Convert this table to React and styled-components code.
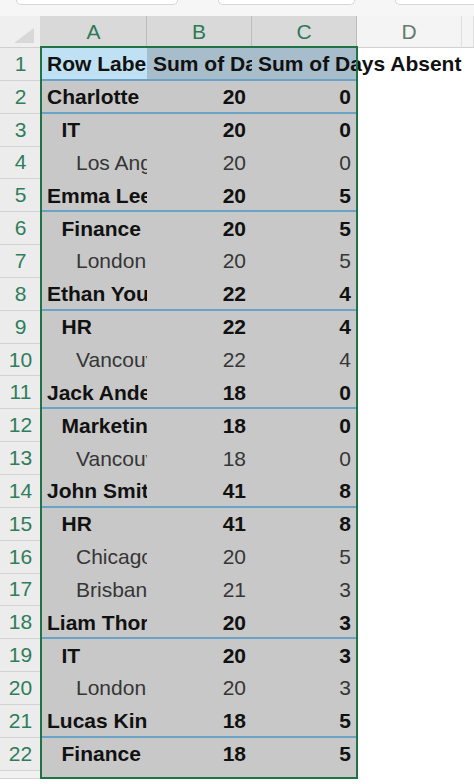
import React from "react";
import styled, { createGlobalStyle } from "styled-components";

const ROW_H = 32.85;

const Global = createGlobalStyle`
  html, body { margin: 0; padding: 0; background: #ffffff; }
  body { overflow: hidden; }
`;

const Page = styled.div`
  width: 474px;
  height: 784px;
  overflow: hidden;
  display: flex;
  flex-direction: column;
  background: #ffffff;
  font-family: "Liberation Sans", Arial, sans-serif;
`;

const TopBar = styled.div`
  height: 16px;
  flex: none;
  background: #f6f6f6;
  display: flex;
  align-items: flex-start;
  padding-left: 16px;
  gap: 40px;
  box-sizing: border-box;
`;

const ToolBox = styled.div`
  height: 4px;
  width: ${(p) => p.$w}px;
  background: #ffffff;
  border: 1px solid #d6d6d6;
  border-top: none;
  border-radius: 0 0 6px 6px;
  flex: none;
`;

const ColHeaderRow = styled.div`
  height: 32px;
  flex: none;
  display: grid;
  grid-template-columns: 41px 106px 105px 105px 105px 1fr;
`;

const Corner = styled.div`
  background: #efefef;
  border-right: 1px solid #d8d8d8;
  border-bottom: 1px solid #d0d0d0;
  box-sizing: border-box;
  display: flex;
  align-items: flex-end;
  justify-content: flex-end;
  padding: 0 6px 4px 0;
`;

const ColHead = styled.div`
  background: ${(p) => (p.$sel ? "#d9d9d9" : "#f4f4f4")};
  color: ${(p) => (p.$sel ? "#2d7a57" : "#667a6c")};
  border-right: 1px solid ${(p) => (p.$sel ? "#bdbdbd" : "#dedede")};
  border-bottom: 1px solid #d0d0d0;
  box-sizing: border-box;
  display: flex;
  align-items: center;
  justify-content: center;
  font-size: 21px;
  padding-top: 1px;
`;

const Body = styled.div`
  position: relative;
  flex: none;
`;

const Row = styled.div`
  height: ${(p) => p.$h}px;
  display: grid;
  grid-template-columns: 41px 106px 105px 105px 105px 1fr;
`;

const RowHead = styled.div`
  background: ${(p) => (p.$partial ? "#f1f1f1" : "#ececec")};
  color: #2f7d5a;
  border-bottom: 1px solid #d3d3d3;
  box-sizing: border-box;
  display: flex;
  align-items: center;
  justify-content: center;
  font-size: 21px;
`;

const Cell = styled.div`
  background: ${(p) => p.$bg};
  box-sizing: border-box;
  border-bottom: ${(p) => (p.$line ? "2px solid #6aa3c6" : "none")};
  display: flex;
  align-items: center;
  justify-content: ${(p) => (p.$num ? "flex-end" : "flex-start")};
  padding-left: ${(p) => (p.$num ? 0 : 6 + (p.$level || 0) * 14.5)}px;
  padding-right: ${(p) => (p.$num ? 6 : 0)}px;
  padding-top: ${(p) => (p.$line ? 2 : 0)}px;
  overflow: ${(p) => (p.$spill ? "visible" : "hidden")};
  white-space: nowrap;
  font-size: 21px;
  font-weight: ${(p) => (p.$bold ? 700 : 400)};
  color: ${(p) => (p.$bold ? "#111111" : "#363636")};
`;

const Blank = styled.div``;

const Selection = styled.div`
  position: absolute;
  left: 40px;
  top: -2px;
  width: 318px;
  bottom: 0;
  border: 2px solid #217346;
  box-sizing: border-box;
  pointer-events: none;
`;

const Footer = styled.div`
  flex: 1;
  background: #ffffff;
`;

const data = [
  ["Charlotte", 0, 20, 0],
  ["IT", 1, 20, 0],
  ["Los Angeles", 2, 20, 0],
  ["Emma Lee", 0, 20, 5],
  ["Finance", 1, 20, 5],
  ["London", 2, 20, 5],
  ["Ethan Young", 0, 22, 4],
  ["HR", 1, 22, 4],
  ["Vancouver", 2, 22, 4],
  ["Jack Anderson", 0, 18, 0],
  ["Marketing", 1, 18, 0],
  ["Vancouver", 2, 18, 0],
  ["John Smith", 0, 41, 8],
  ["HR", 1, 41, 8],
  ["Chicago", 2, 20, 5],
  ["Brisbane", 2, 21, 3],
  ["Liam Thornton", 0, 20, 3],
  ["IT", 1, 20, 3],
  ["London", 2, 20, 3],
  ["Lucas King", 0, 18, 5],
  ["Finance", 1, 18, 5],
];

const GRAY = "#c8c8c8";

export default function App() {
  return (
    <>
      <Global />
      <Page>
        <TopBar>
          <ToolBox $w={160} />
          <ToolBox $w={135} />
          <ToolBox $w={130} />
        </TopBar>
        <ColHeaderRow>
          <Corner>
            <svg width="20" height="15" viewBox="0 0 20 15">
              <polygon points="20,0 20,15 0,15" fill="#d8d8d8" />
            </svg>
          </Corner>
          <ColHead $sel>A</ColHead>
          <ColHead $sel>B</ColHead>
          <ColHead $sel>C</ColHead>
          <ColHead>D</ColHead>
          <ColHead />
        </ColHeaderRow>
        <Body>
          <Row $h={ROW_H}>
            <RowHead>1</RowHead>
            <Cell $bg="#c0e1f3" $bold $line>Row Labels</Cell>
            <Cell $bg="#a8bdcc" $bold $line>Sum of Days Worked</Cell>
            <Cell $bg="#a8bdcc" $bold $line $spill>Sum of Days Absent</Cell>
            <Blank />
            <Blank />
          </Row>
          {data.map(([label, level, worked, absent], i) => {
            const bold = level < 2;
            const line = level === 0;
            return (
              <Row key={i} $h={ROW_H}>
                <RowHead>{i + 2}</RowHead>
                <Cell $bg={GRAY} $bold={bold} $line={line} $level={level}>
                  {label}
                </Cell>
                <Cell $bg={GRAY} $bold={bold} $line={line} $num>
                  {worked}
                </Cell>
                <Cell $bg={GRAY} $bold={bold} $line={line} $num>
                  {absent}
                </Cell>
                <Blank />
                <Blank />
              </Row>
            );
          })}
          <Row $h={8}>
            <RowHead $partial />
            <Cell $bg={GRAY} />
            <Cell $bg={GRAY} />
            <Cell $bg={GRAY} />
            <Blank />
            <Blank />
          </Row>
          <Selection />
        </Body>
        <Footer />
      </Page>
    </>
  );
}
